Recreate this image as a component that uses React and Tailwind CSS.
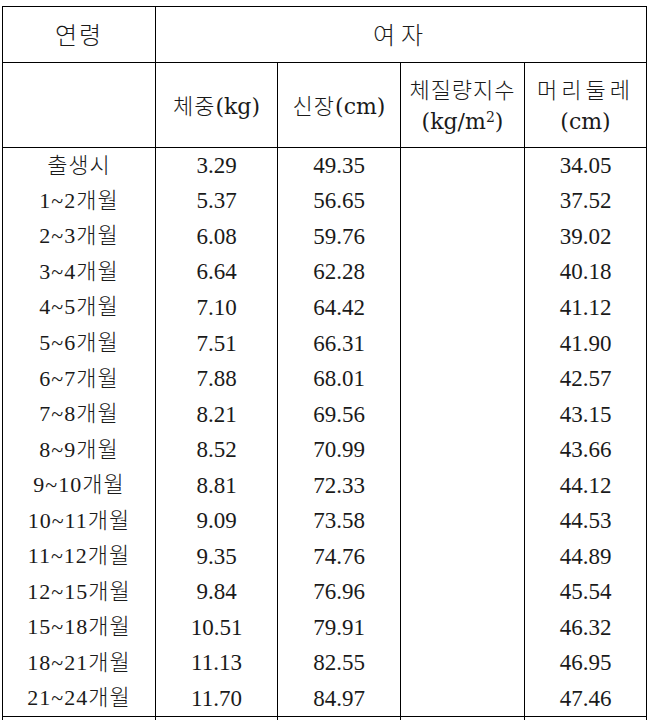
// 여아 성장 표준치 표
const ROWS = [
  ['출생시', '3.29', '49.35', '', '34.05'],
  ['1~2개월', '5.37', '56.65', '', '37.52'],
  ['2~3개월', '6.08', '59.76', '', '39.02'],
  ['3~4개월', '6.64', '62.28', '', '40.18'],
  ['4~5개월', '7.10', '64.42', '', '41.12'],
  ['5~6개월', '7.51', '66.31', '', '41.90'],
  ['6~7개월', '7.88', '68.01', '', '42.57'],
  ['7~8개월', '8.21', '69.56', '', '43.15'],
  ['8~9개월', '8.52', '70.99', '', '43.66'],
  ['9~10개월', '8.81', '72.33', '', '44.12'],
  ['10~11개월', '9.09', '73.58', '', '44.53'],
  ['11~12개월', '9.35', '74.76', '', '44.89'],
  ['12~15개월', '9.84', '76.96', '', '45.54'],
  ['15~18개월', '10.51', '79.91', '', '46.32'],
  ['18~21개월', '11.13', '82.55', '', '46.95'],
  ['21~24개월', '11.70', '84.97', '', '47.46'],
];

const font = "font-['Liberation_Serif','Noto_Sans_CJK_KR',serif]";
const headFont = "font-['DejaVu_Serif','Noto_Sans_CJK_KR',serif]";

export default function App() {
  return (
    <div className={`min-h-[720px] bg-white pl-[2px] pt-[6px] text-[#1a1a1a] ${font}`}>
      <table className="table-fixed border-collapse w-[644px]">
        <colgroup>
          <col className="w-[153px]" />
          <col className="w-[122px]" />
          <col className="w-[123px]" />
          <col className="w-[124px]" />
          <col className="w-[122px]" />
        </colgroup>
        <thead className={`font-light ${headFont}`}>
          <tr className="h-[56px]">
            <th className="border border-black text-[24px] font-light tracking-[2px] text-center align-middle pt-[2px]">연령</th>
            <th colSpan={4} className="border border-black text-[24px] font-light tracking-[6px] text-center align-middle pt-[2px]">여자</th>
          </tr>
          <tr className="h-[85px]">
            <th className="border border-black" />
            <th className="border border-black text-[22px] font-light text-center align-middle pt-[2px]">
              <span className="tracking-[1px]">체중</span>(kg)
            </th>
            <th className="border border-black text-[22px] font-light text-center align-middle pt-[2px]">
              <span className="tracking-[1px]">신장</span>(cm)
            </th>
            <th className="border border-black text-[22px] font-light text-center align-middle leading-[31px] pt-[2px]">
              <div className="tracking-[1px]">체질량지수</div>
              <div>(kg/m<sup className="text-[14px]">2</sup>)</div>
            </th>
            <th className="border border-black text-[22px] font-light text-center align-middle leading-[31px] pt-[2px]">
              <div className="tracking-[4px]">머리둘레</div>
              <div>(cm)</div>
            </th>
          </tr>
        </thead>
        <tbody className="border-b border-black">
          {ROWS.map((r) => (
            <tr key={r[0]} className="h-[35.56px]">
              {r.map((c, i) => (
                <td
                  key={i}
                  className={
                    i === 0
                      ? 'border-x border-black text-center align-middle leading-none text-[22px] font-light tracking-[1px]'
                      : 'border-x border-black text-center align-middle leading-none text-[23px]'
                  }
                >
                  {c}
                </td>
              ))}
            </tr>
          ))}
        </tbody>
        <tbody>
          <tr className="h-[20px]">
            {[0, 1, 2, 3, 4].map((i) => (
              <td key={i} className="border-x border-black" />
            ))}
          </tr>
        </tbody>
      </table>
    </div>
  );
}
